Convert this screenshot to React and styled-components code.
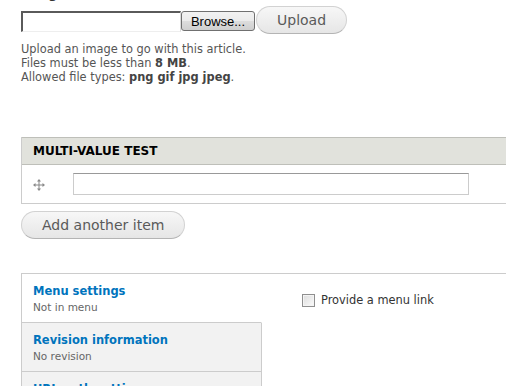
import React from 'react';
import styled, { createGlobalStyle } from 'styled-components';

const GlobalStyle = createGlobalStyle`
  html, body {
    margin: 0;
    padding: 0;
    background: #fff;
    overflow: hidden;
  }
  body {
    font-family: "DejaVu Sans", Verdana, sans-serif;
    color: #333;
  }
`;

const Page = styled.div`
  width: 560px;
  padding-left: 21px;
`;

const FieldLabel = styled.div`
  font-size: 13px;
  font-weight: bold;
  line-height: 16px;
  margin-top: -14px;
  height: 16px;
`;

const UploadRow = styled.div`
  display: flex;
  align-items: center;
  margin-top: 4px;
  height: 28px;
`;

const FileBox = styled.div`
  width: 157px;
  height: 18px;
  border-style: solid;
  border-width: 2px 1px 1px 2px;
  border-color: #5a5a5a #dcdcdc #eeeeee #5a5a5a;
  margin-top: 2px;
`;

const BrowseButton = styled.button`
  height: 20px;
  width: 74px;
  margin-top: 2px;
  padding: 0;
  font-family: "Liberation Sans", Arial, sans-serif;
  font-size: 13px;
  color: #000;
  border: 1px solid #707070;
  border-radius: 3px;
  background: linear-gradient(#f2f2f2, #ebebeb 50%, #dddddd 51%, #cfcfcf);
`;

const PillButton = styled.button`
  height: 28px;
  padding: 0 20px;
  margin-left: ${p => p.$ml || 0}px;
  font-family: "DejaVu Sans", Verdana, sans-serif;
  font-size: 14px;
  color: #5a5a5a;
  border: 1px solid #d2d2d2;
  border-bottom-color: #b4b4b4;
  border-radius: 20px;
  background: linear-gradient(#f7f7f7, #e6e6e6);
`;

const Description = styled.div`
  margin-top: 8px;
  font-size: 11.4px;
  line-height: 14px;
  color: #555;

  strong {
    font-weight: bold;
    color: #444;
  }
`;

const FieldTable = styled.div`
  margin-top: 53px;
  border-left: 1px solid #cccccc;
  border-bottom: 1px solid #cccccc;
`;

const TableHead = styled.div`
  height: 26px;
  display: flex;
  align-items: center;
  padding-left: 11px;
  background: #e1e2dc;
  border-top: 1px solid #bebfb9;
  border-bottom: 1px solid #bebfb9;
  font-size: 12px;
  font-weight: bold;
  text-transform: uppercase;
  color: #000;
`;

const TableRow = styled.div`
  height: 38px;
  display: flex;
  align-items: center;
  padding-left: 11px;
`;

const DragHandle = styled.span`
  width: 12px;
  height: 12px;
  display: flex;
  margin: 2px 28px 0 0;
`;

const TextInput = styled.div`
  width: 394px;
  height: 20px;
  border: 1px solid #cccccc;
  border-top-color: #999999;
`;

const ButtonRow = styled.div`
  margin-top: 7px;
`;

const VerticalTabs = styled.div`
  margin-top: 34px;
  display: flex;
  border-top: 1px solid #cccccc;
  border-left: 1px solid #cccccc;
  height: 140px;
`;

const TabList = styled.div`
  width: 240px;
  display: flex;
  flex-direction: column;
`;

const Tab = styled.div`
  height: 49px;
  padding: 10px 0 0 11px;
  box-sizing: border-box;
  background: ${p => (p.$active ? '#fff' : '#f2f2f2')};
  border-right: 1px solid ${p => (p.$active ? '#fff' : '#cccccc')};
  border-bottom: 1px solid #cccccc;
  flex-shrink: 0;
`;

const TabTitle = styled.div`
  font-size: 11.5px;
  font-weight: bold;
  color: #0074bd;
  line-height: 15px;
`;

const TabSummary = styled.div`
  font-size: 10.5px;
  color: #666;
  line-height: 16px;
`;

const Pane = styled.div`
  flex: 1;
  padding: 19px 0 0 40px;
`;

const CheckLabel = styled.label`
  display: flex;
  align-items: center;
  gap: 6px;
  font-size: 11.4px;
  color: #333;
`;

const CheckBox = styled.span`
  width: 11px;
  height: 11px;
  border: 1px solid #8f8f8f;
  background: linear-gradient(135deg, #dcdcdc, #fbfbfb);
  box-shadow: inset 0 0 0 1px #f4f4f4;
`;

const MoveIcon = () => (
  <svg width="12" height="12" viewBox="0 0 12 12" fill="#888">
    <rect x="5.5" y="2" width="1" height="8" />
    <rect x="2" y="5.5" width="8" height="1" />
    <polygon points="6,0 4,2.5 8,2.5" />
    <polygon points="6,12 4,9.5 8,9.5" />
    <polygon points="0,6 2.5,4 2.5,8" />
    <polygon points="12,6 9.5,4 9.5,8" />
  </svg>
);

const tabs = [
  { title: 'Menu settings', summary: 'Not in menu', active: true },
  { title: 'Revision information', summary: 'No revision' },
  { title: 'URL path settings', summary: 'No alias' },
];

export default function App() {
  return (
    <>
      <GlobalStyle />
      <Page>
        <FieldLabel>Image</FieldLabel>
        <UploadRow>
          <FileBox />
          <BrowseButton>Browse...</BrowseButton>
          <PillButton $ml={1}>Upload</PillButton>
        </UploadRow>
        <Description>
          Upload an image to go with this article.<br />
          Files must be less than <strong>8 MB</strong>.<br />
          Allowed file types: <strong>png gif jpg jpeg</strong>.
        </Description>

        <FieldTable>
          <TableHead>Multi-value test</TableHead>
          <TableRow>
            <DragHandle><MoveIcon /></DragHandle>
            <TextInput />
          </TableRow>
        </FieldTable>
        <ButtonRow>
          <PillButton>Add another item</PillButton>
        </ButtonRow>

        <VerticalTabs>
          <TabList>
            {tabs.map(t => (
              <Tab key={t.title} $active={t.active}>
                <TabTitle>{t.title}</TabTitle>
                <TabSummary>{t.summary}</TabSummary>
              </Tab>
            ))}
          </TabList>
          <Pane>
            <CheckLabel>
              <CheckBox />
              Provide a menu link
            </CheckLabel>
          </Pane>
        </VerticalTabs>
      </Page>
    </>
  );
}
